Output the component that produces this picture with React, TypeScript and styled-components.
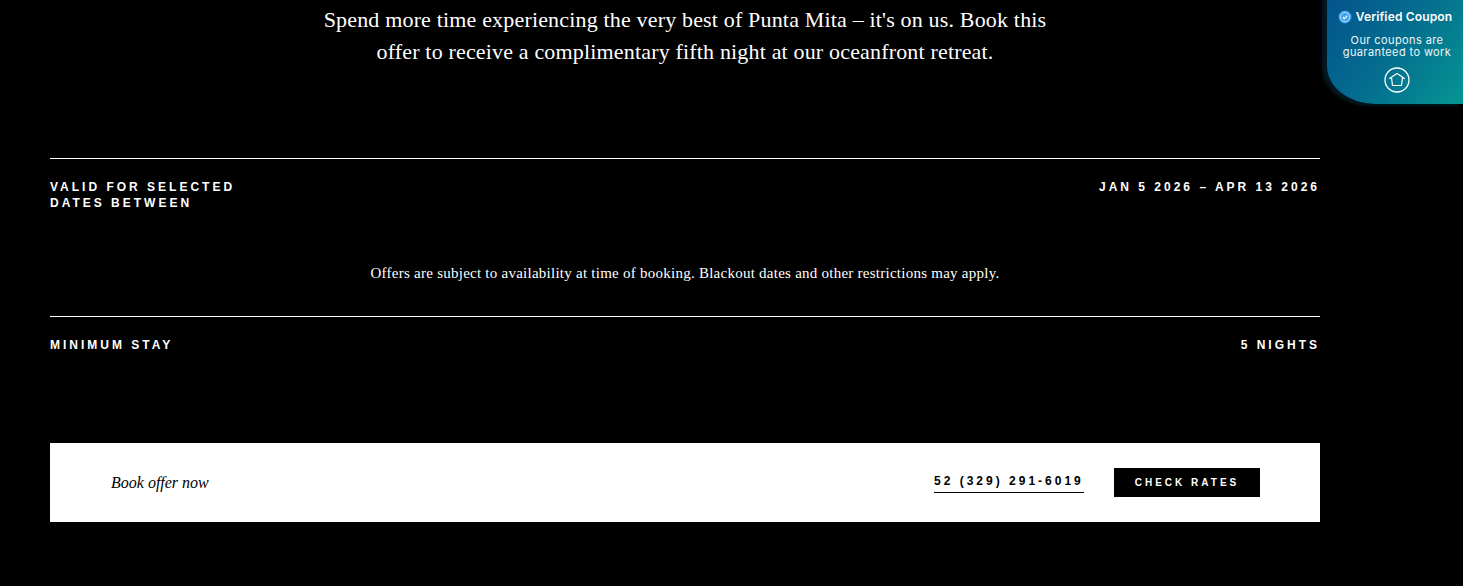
import styled, { createGlobalStyle } from "styled-components";

const GlobalStyle = createGlobalStyle`
  html, body {
    margin: 0;
    padding: 0;
    background: #000;
    overflow: hidden;
  }
`;

const serif = `"Liberation Serif", "Times New Roman", serif`;
const sans = `"Liberation Sans", Arial, sans-serif`;

const Page = styled.div`
  position: relative;
  height: 586px;
  background: #000;
  color: #fff;
  overflow: hidden;
`;

const Content = styled.main`
  width: 1270px;
  margin-left: 50px;
  padding-top: 4px;
`;

const Intro = styled.p`
  margin: 0 0 90px;
  text-align: center;
  font-family: ${serif};
  font-size: 22px;
  line-height: 32px;
  letter-spacing: 0.17px;
`;

const Section = styled.section`
  border-top: 1px solid #fff;
  padding-top: 20px;
`;

const Row = styled.div`
  display: flex;
  justify-content: space-between;
  align-items: flex-start;
`;

const Label = styled.div`
  font-family: ${sans};
  font-weight: 700;
  font-size: 12px;
  line-height: 16px;
  letter-spacing: 3px;
  text-transform: uppercase;
`;

const Note = styled.p`
  margin: 50px 0 31px;
  text-align: center;
  font-family: ${serif};
  font-size: 15px;
  line-height: 24px;
  letter-spacing: 0.25px;
`;

const BookBar = styled.div`
  display: flex;
  align-items: center;
  justify-content: space-between;
  height: 79px;
  margin-top: 90px;
  padding: 0 60px 0 61px;
  background: #fff;
  color: #000;
`;

const BookTitle = styled.em`
  font-family: ${serif};
  font-size: 16px;
`;

const Actions = styled.div`
  display: flex;
  align-items: center;
  gap: 30px;
`;

const Phone = styled.a`
  display: block;
  width: 150px;
  height: 21px;
  box-sizing: border-box;
  padding-top: 1px;
  border-bottom: 1px solid #000;
  font-family: ${sans};
  font-weight: 700;
  font-size: 12px;
  line-height: 16px;
  letter-spacing: 3px;
  white-space: nowrap;
`;

const RatesButton = styled.button`
  width: 146px;
  height: 29px;
  padding: 0;
  border: 0;
  background: #000;
  color: #fff;
  font-family: ${sans};
  font-weight: 700;
  font-size: 10px;
  letter-spacing: 3px;
`;

const Badge = styled.aside`
  position: absolute;
  top: -20px;
  right: 0;
  width: 136px;
  height: 124px;
  box-sizing: border-box;
  padding-top: 29px;
  border-bottom-left-radius: 48px 38px;
  background: linear-gradient(125deg, #04508c 0%, #04708f 55%, #069593 100%);
  box-shadow: -5px 2px 3px rgba(5, 28, 40, 0.85);
  font-family: Inter, sans-serif;
  text-align: center;
`;

const BadgeTitle = styled.div`
  display: flex;
  align-items: center;
  justify-content: center;
  gap: 4px;
  font-size: 12px;
  line-height: 16px;
  font-weight: 600;
  letter-spacing: 0.15px;
  white-space: nowrap;
`;

const BadgeText = styled.div`
  margin-top: 9px;
  padding-left: 4px;
  font-size: 11px;
  line-height: 12px;
  letter-spacing: 0.4px;
  color: #eef6f8;
`;

const BadgeIcon = styled.svg`
  display: block;
  margin: 9px auto 0;
  position: relative;
  left: 2px;
`;

export default function App() {
  return (
    <Page>
      <GlobalStyle />
      <Content>
        <Intro>
          Spend more time experiencing the very best of Punta Mita – it's on us. Book this
          <br />
          offer to receive a complimentary fifth night at our oceanfront retreat.
        </Intro>
        <Section>
          <Row>
            <Label>
              Valid for selected
              <br />
              dates between
            </Label>
            <Label>Jan 5 2026 – Apr 13 2026</Label>
          </Row>
          <Note>Offers are subject to availability at time of booking. Blackout dates and other restrictions may apply.</Note>
        </Section>
        <Section>
          <Row>
            <Label>Minimum stay</Label>
            <Label>5 nights</Label>
          </Row>
        </Section>
        <BookBar>
          <BookTitle>Book offer now</BookTitle>
          <Actions>
            <Phone>52 (329) 291-6019</Phone>
            <RatesButton>CHECK RATES</RatesButton>
          </Actions>
        </BookBar>
      </Content>
      <Badge>
        <BadgeTitle>
          <svg width="14" height="14" viewBox="0 0 14 14" aria-hidden="true">
            <circle cx="7" cy="7" r="6.5" fill="#3ea2ee" />
            <circle cx="7" cy="7" r="4.6" fill="none" stroke="#cfe8fb" strokeWidth="0.8" />
            <path d="M4.8 7.2l1.6 1.5 2.9-3" fill="none" stroke="#fff" strokeWidth="1.2" />
          </svg>
          Verified Coupon
        </BadgeTitle>
        <BadgeText>
          Our coupons are
          <br />
          guaranteed to work
        </BadgeText>
        <BadgeIcon width="26" height="26" viewBox="0 0 26 26" aria-hidden="true">
          <circle cx="13" cy="13" r="12" fill="none" stroke="#fff" strokeWidth="1.3" />
          <path d="M5.5 11.5L13 6.5l7.5 5M7.5 10.5L8.5 18.5h9l1-8" fill="none" stroke="#fff" strokeWidth="1.2" strokeLinejoin="round" strokeLinecap="round" />
        </BadgeIcon>
      </Badge>
    </Page>
  );
}
